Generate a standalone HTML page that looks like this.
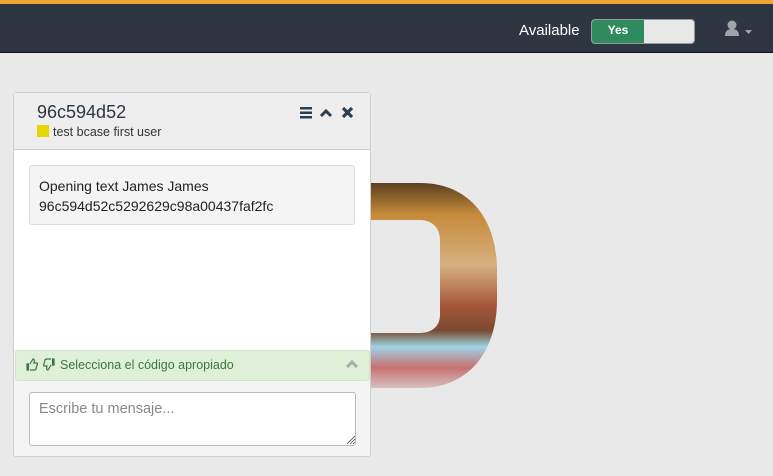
<!DOCTYPE html>
<html><head><meta charset="utf-8"><style>
*{box-sizing:border-box;margin:0;padding:0}
body{width:773px;height:476px;background:#e9e9e9;font-family:"Liberation Sans",sans-serif;position:relative;overflow:hidden}
.nav{position:absolute;left:0;top:0;width:773px;height:53px;background:#2d3641;border-top:4px solid #f0a436;border-bottom:1px solid #111}
.avail{position:absolute;left:519px;top:18px;color:#fff;font-size:15px}
.tog{position:absolute;left:591px;top:15px;width:104px;height:25px;border:1px solid #999;border-radius:4px;background:#e8e8e8;overflow:hidden}
.tog b{position:absolute;left:0;top:0;width:52px;height:23px;background:#2f8b5e;color:#fff;font-size:12px;text-align:center;line-height:21px}
.panel{position:absolute;left:13px;top:92px;width:358px;height:365px;background:#f4f4f4;border:1px solid #d0d0d0;border-radius:3px}
.hdr{height:57px;background:#eeeeee;border-bottom:1px solid #cfcfcf}
.title{position:absolute;left:23px;top:9px;font-size:18px;color:#2d3641}
.sub{position:absolute;left:23px;top:32px;font-size:12.5px;color:#333}
.sub i{display:inline-block;width:12px;height:12px;background:#e5d800;vertical-align:-1px;margin-right:4px}
.body{position:absolute;left:0;top:57px;width:356px;height:200px;background:#fff}
.msg{position:absolute;left:15px;top:15px;width:326px;height:60px;background:#f4f4f4;border:1px solid #ddd;border-radius:3px;padding:10px 9px;font-size:14px;line-height:20px;color:#222}
.green{position:absolute;left:1px;top:257px;width:355px;height:31px;background:#dff0d8;border:1px solid #d0e6c8;border-radius:3px;color:#3c763d;font-size:12.5px}
.ta{position:absolute;left:15px;top:299px;width:327px;height:54px;background:#fff;border:1px solid #bbb;border-radius:3px;padding:8px 9px;font-size:14.5px;color:#888}
</style></head><body>
<svg style="position:absolute;left:0;top:0" width="773" height="476">
<defs><linearGradient id="g" x1="0" y1="0" x2="0" y2="1">
<stop offset="0" stop-color="#5a4020"/><stop offset="0.15" stop-color="#c58a3a"/><stop offset="0.4" stop-color="#d7b080"/><stop offset="0.6" stop-color="#a5563a"/><stop offset="0.72" stop-color="#7a4a30"/><stop offset="0.8" stop-color="#9fd4e6"/><stop offset="0.9" stop-color="#c77070"/><stop offset="1" stop-color="#d8c0c0"/></linearGradient></defs>
<path fill-rule="evenodd" fill="url(#g)" d="M360 183 H420 C470 183 497 220 497 270 V300 C497 350 470 388 420 388 H360 Z M360 220 H420 C432 220 440 228 440 240 V315 C440 326 432 333 420 333 H360 Z"/>
</svg>
<div class="nav">
<div class="avail">Available</div>
<div class="tog"><b>Yes</b></div>
<svg style="position:absolute;left:724px;top:16px" width="30" height="20"><circle cx="8" cy="5" r="4.5" fill="#a0a5ab"/><path d="M1 16 Q1 9 8 9 Q15 9 15 16 Z" fill="#a0a5ab"/><path d="M21 10 h7 l-3.5 4z" fill="#a0a5ab"/></svg>
</div>
<div class="panel">
<div class="hdr"></div>
<div class="title">96c594d52</div>
<div class="sub"><i></i>test bcase first user</div>
<svg style="position:absolute;left:286px;top:13px" width="58" height="14"><g fill="#2d3e50"><rect x="0" y="1" width="12" height="2.5"/><rect x="0" y="5.5" width="12" height="2.5"/><rect x="0" y="10" width="12" height="2.5"/></g><path d="M21 10 L26 5 L31 10" stroke="#2d3e50" stroke-width="3" fill="none"/><path d="M43 2 L52 11 M52 2 L43 11" stroke="#2d3e50" stroke-width="3.2"/></svg>
<div class="body"><div class="msg">Opening text James James<br>96c594d52c5292629c98a00437faf2fc</div></div>
<div class="green">
<svg style="position:absolute;left:10px;top:7px" width="30" height="14"><g stroke="#3c763d" stroke-width="1.2" fill="none"><path d="M1 6h1.5v6H1z" fill="#3c763d"/><path d="M4 6l3-5q2 0 1 4h3q1 1 0 2l-1 4q0 1-2 1H4"/><path d="M28 1h-1.5v6H28z" fill="#3c763d"/><path d="M25 7l-3 5q-2 0-1-4h-3q-1-1 0-2l1-4q0-1 2-1h4"/></g></svg>
<span style="position:absolute;left:44px;top:7px">Selecciona el código apropiado</span>
<svg style="position:absolute;left:330px;top:9px" width="12" height="8"><path d="M1 7 L6 2 L11 7" stroke="#aaa" stroke-width="3" fill="none"/></svg>
</div>
<div class="ta">Escribe tu mensaje...</div>
<svg style="position:absolute;left:333px;top:343px" width="8" height="8"><path d="M0 8L8 0M3 8L8 3M6 8L8 6" stroke="#555" stroke-width="0.8"/></svg>
</div>
</body></html>
